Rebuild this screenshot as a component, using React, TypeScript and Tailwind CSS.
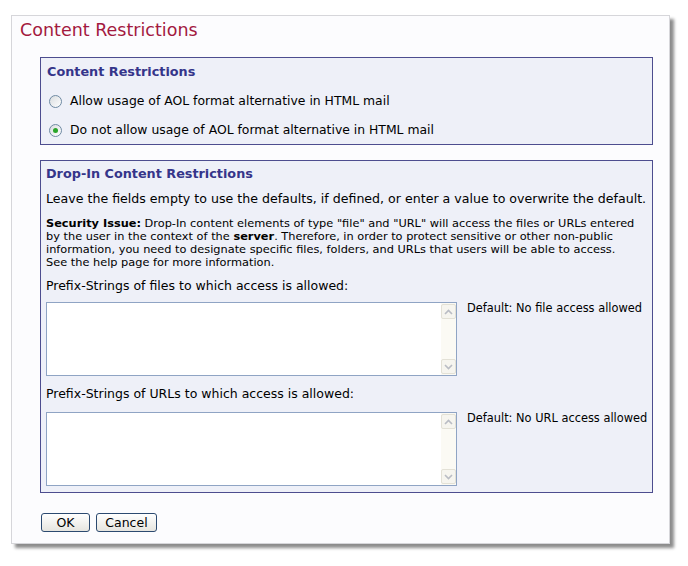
function Radio({ checked }: { checked?: boolean }) {
  return (
    <span className="w-[13px] h-[13px] rounded-full border border-[#6f8aa3] bg-gradient-to-br from-[#d9dcdf] to-white flex items-center justify-center shrink-0">
      {checked && <span className="w-[5px] h-[5px] rounded-full bg-[#2aa52a]" />}
    </span>
  );
}

function ChevronUp() {
  return (
    <svg width="9" height="6" viewBox="0 0 9 6">
      <path d="M1 5 L4.5 1.5 L8 5" fill="none" stroke="#b9bcc4" strokeWidth="1.6" />
    </svg>
  );
}

function ChevronDown() {
  return (
    <svg width="9" height="6" viewBox="0 0 9 6">
      <path d="M1 1 L4.5 4.5 L8 1" fill="none" stroke="#b9bcc4" strokeWidth="1.6" />
    </svg>
  );
}

function FakeTextarea() {
  return (
    <div className="w-[411px] h-[74px] border border-[#8fa4c4] bg-white flex shrink-0">
      <div className="flex-1" />
      <div className="w-[15px] h-full bg-[#fbfaf4] flex flex-col justify-between py-[1px]">
        <div className="h-[15px] border border-[#e3e1d6] rounded-[2px] bg-[#f6f5ef] flex items-center justify-center">
          <ChevronUp />
        </div>
        <div className="h-[15px] border border-[#e3e1d6] rounded-[2px] bg-[#f6f5ef] flex items-center justify-center">
          <ChevronDown />
        </div>
      </div>
    </div>
  );
}

export default function App() {
  return (
    <div className="w-[688px] h-[566px] bg-white font-['DejaVu_Sans',Verdana,sans-serif] text-black pt-[15px] pl-[11px]">
      <div className="w-[659px] h-[529px] bg-[#fcfcfe] border border-[#d6d6da] shadow-[4px_4px_3px_rgba(0,0,0,0.45)] flex flex-col">
        <h1 className="text-[17.5px] leading-[20px] text-[#a3193f] pl-[8px] pt-[4px]">Content Restrictions</h1>

        <div className="ml-[28px] mr-[16px] mt-[17px] h-[88px] border border-[#4d4d8f] bg-[#eef0f8] flex flex-col pl-[6px] pt-[6px]">
          <div className="text-[12.8px] leading-[16px] font-bold text-[#35358a]">Content Restrictions</div>
          <label className="flex items-center h-[20px] mt-[11px] pl-[2px] gap-[8px] text-[12.4px]">
            <Radio />
            <span>Allow usage of AOL format alternative in HTML mail</span>
          </label>
          <label className="flex items-center h-[20px] mt-[9px] pl-[2px] gap-[8px] text-[12.4px]">
            <Radio checked />
            <span>Do not allow usage of AOL format alternative in HTML mail</span>
          </label>
        </div>

        <div className="ml-[28px] mr-[16px] mt-[15px] border border-[#4d4d8f] bg-[#eef0f8] flex flex-col pl-[5px] pt-[5px] pb-[6px]">
          <div className="text-[12.8px] leading-[16px] font-bold text-[#35358a]">Drop-In Content Restrictions</div>
          <div className="text-[12.6px] leading-[16px] mt-[9px] whitespace-nowrap">
            Leave the fields empty to use the defaults, if defined, or enter a value to overwrite the default.
          </div>
          <div className="text-[11.35px] leading-[13px] mt-[10px] whitespace-nowrap">
            <b>Security Issue:</b> Drop-In content elements of type "file" and "URL" will access the files or URLs entered
            <br />
            by the user in the context of the <b>server</b>. Therefore, in order to protect sensitive or other non-public
            <br />
            information, you need to designate specific files, folders, and URLs that users will be able to access.
            <br />
            See the help page for more information.
          </div>
          <div className="text-[12.5px] leading-[16px] mt-[9px]">Prefix-Strings of files to which access is allowed:</div>
          <div className="flex items-start mt-[8px] gap-[10px]">
            <FakeTextarea />
            <div className="text-[11.4px] leading-[16px] -mt-[2px] whitespace-nowrap">Default: No file access allowed</div>
          </div>
          <div className="text-[12.5px] leading-[16px] mt-[10px]">Prefix-Strings of URLs to which access is allowed:</div>
          <div className="flex items-start mt-[10px] gap-[10px]">
            <FakeTextarea />
            <div className="text-[11.4px] leading-[16px] -mt-[2px] whitespace-nowrap">Default: No URL access allowed</div>
          </div>
        </div>

        <div className="flex ml-[29px] mt-[20px] gap-[6px]">
          <button className="w-[49px] h-[19px] rounded-[3px] border border-[#2c4a70] bg-gradient-to-b from-white to-[#e6e5df] text-[12.5px] leading-[16px] text-black">
            OK
          </button>
          <button className="w-[61px] h-[19px] rounded-[3px] border border-[#2c4a70] bg-gradient-to-b from-white to-[#e6e5df] text-[12.5px] leading-[16px] text-black">
            Cancel
          </button>
        </div>
      </div>
    </div>
  );
}
